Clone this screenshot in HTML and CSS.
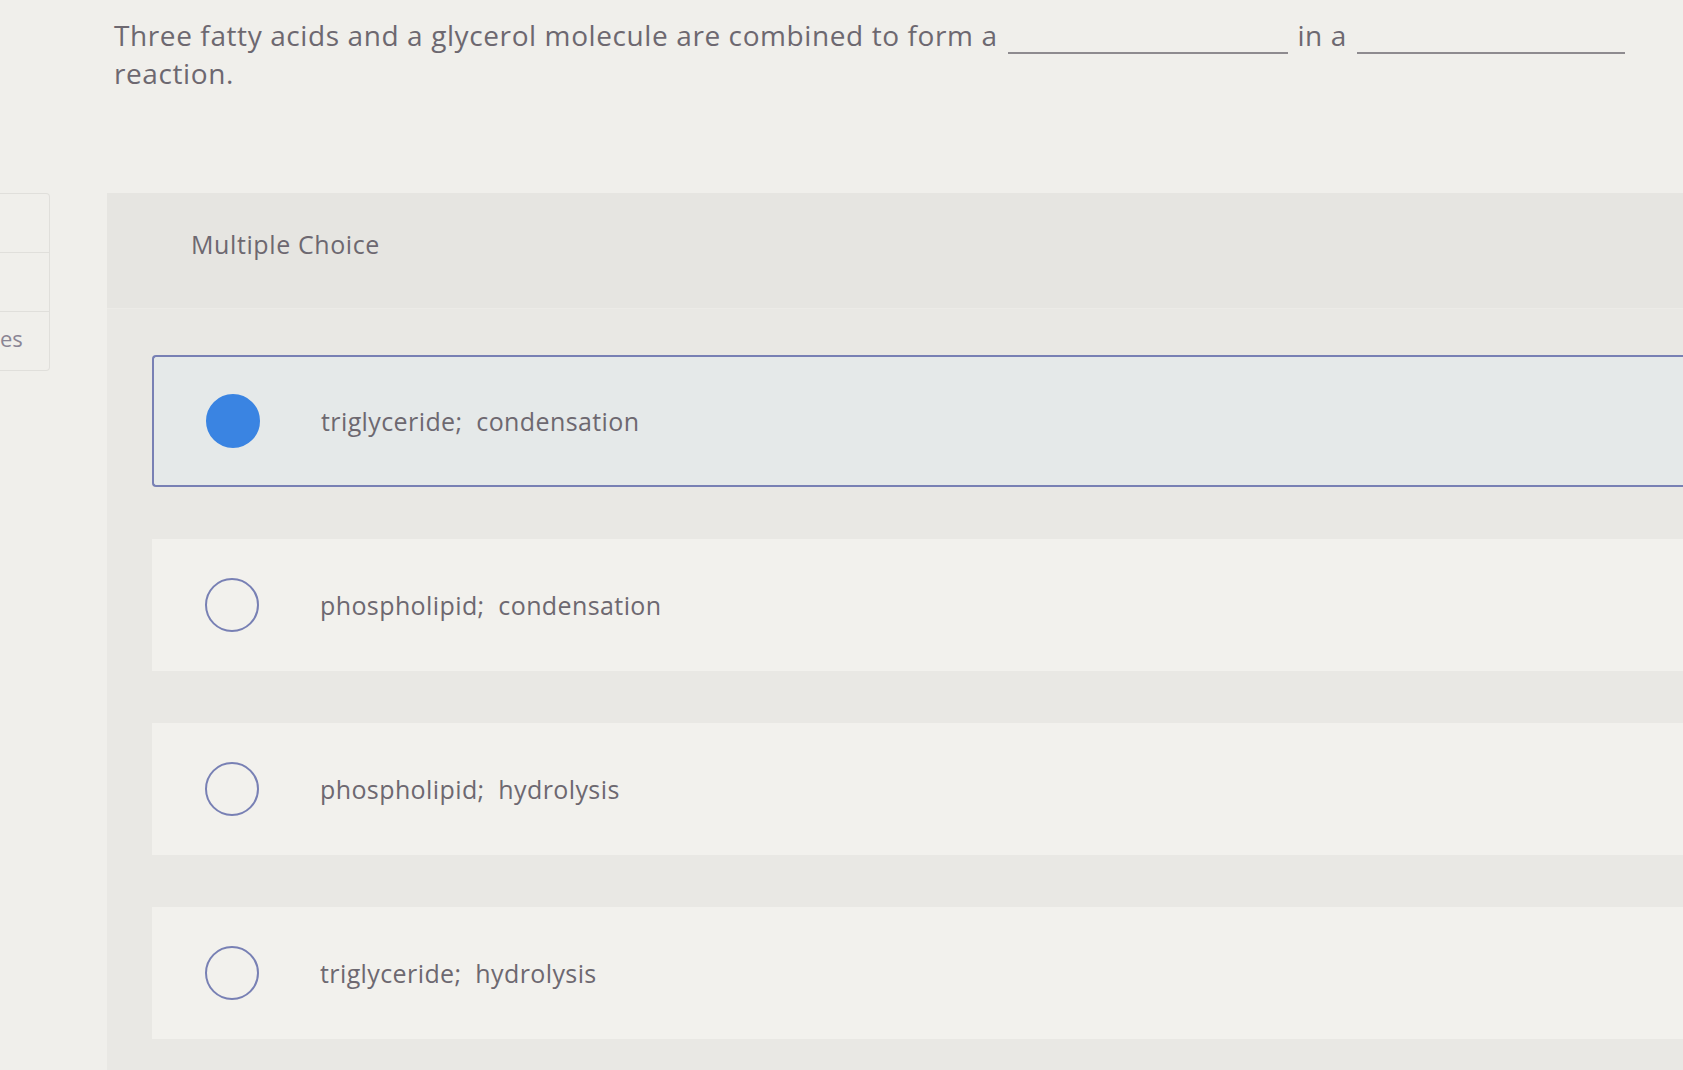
FILE: index.html
```html
<!DOCTYPE html>
<html lang="en">
<head>
    <meta charset="UTF-8">
    <meta name="viewport" content="width=device-width, initial-scale=1.0">
    <title>Multiple Choice</title>
    <link rel="stylesheet" href="styles.css">
</head>
<body>

<div class="page">
    <!-- Columna lateral (cortada por la izquierda) -->
    <aside class="sidebar">
        <div class="side-item"></div>
        <div class="side-item"></div>
        <div class="side-item side-label">es</div>
    </aside>

    <main class="content">
        <p class="question">
            Three fatty acids and a glycerol molecule are combined to form a
            <span class="blank blank-1"></span> in a <span class="blank blank-2"></span>
            reaction.
        </p>

        <section class="choice-panel">
            <div class="choice-header">Multiple Choice</div>

            <div class="options">
                <label class="option selected">
                    <span class="radio"></span>
                    <span class="option-text">triglyceride;&nbsp; condensation</span>
                </label>
                <label class="option">
                    <span class="radio"></span>
                    <span class="option-text">phospholipid;&nbsp; condensation</span>
                </label>
                <label class="option">
                    <span class="radio"></span>
                    <span class="option-text">phospholipid;&nbsp; hydrolysis</span>
                </label>
                <label class="option">
                    <span class="radio"></span>
                    <span class="option-text">triglyceride;&nbsp; hydrolysis</span>
                </label>
            </div>
        </section>
    </main>
</div>

</body>
</html>
```

FILE: styles.css
```css
:root {
    --color-fondo: #f0efeb;
    --color-panel: #e9e8e4;
    --color-cabecera: #e6e5e1;
    --color-opcion: #f2f1ed;
    --color-texto: #6d6870;
    --color-borde: #7880b4;
    --color-seleccion: #e5e9e9;
    --color-radio: #3a84e2;
}

body {
    font-family: 'Open Sans', Lato, sans-serif;
    margin: 0;
    padding: 0;
    background-color: var(--color-fondo);
    color: var(--color-texto);
    overflow: hidden;
}

.page {
    display: grid;
    grid-template-columns: 50px 1fr;
    min-height: 1070px;
}

.sidebar {
    margin-top: 193px;
    align-self: start;
    border: 1px solid #e0dfdb;
    border-left: none;
    border-radius: 0 4px 4px 0;
}

.side-item {
    height: 58px;
    border-bottom: 1px solid #e0dfdb;
}

.side-item:last-child {
    border-bottom: none;
}

.side-label {
    display: flex;
    align-items: center;
    font-size: 22px;
    color: #8a8594;
    padding-bottom: 6px;
    box-sizing: border-box;
}

.content {
    padding-left: 57px;
}

.question {
    margin: 0;
    padding: 16px 0 0 7px;
    font-size: 28px;
    line-height: 38px;
    max-width: 1530px;
    letter-spacing: 0.6px;
}

.blank {
    display: inline-block;
    border-bottom: 2px solid #8e8b8f;
    vertical-align: -8px;
}

.blank-1 {
    width: 280px;
    margin: 0 2px;
}

.blank-2 {
    width: 268px;
    margin-left: 2px;
}

.choice-panel {
    margin-top: 101px;
    background-color: var(--color-panel);
    min-height: 900px;
}

.choice-header {
    background-color: var(--color-cabecera);
    height: 116px;
    box-sizing: border-box;
    padding: 34px 0 0 84px;
    font-size: 25px;
    letter-spacing: 0.6px;
    border-bottom: 1px solid #ecebe7;
}

.options {
    display: flex;
    flex-direction: column;
    gap: 52px;
    padding: 46px 0 0 45px;
}

.option {
    display: flex;
    align-items: center;
    height: 130px;
    padding-left: 52px;
    background-color: var(--color-opcion);
    font-size: 25px;
    letter-spacing: 0.4px;
    cursor: pointer;
    border: 1px solid transparent;
}

.option.selected {
    background-color: var(--color-seleccion);
    border: 2px solid var(--color-borde);
    border-right: none;
    border-radius: 4px 0 0 4px;
    height: 128px;
}

.radio {
    width: 50px;
    height: 50px;
    border: 2px solid var(--color-borde);
    border-radius: 50%;
    flex-shrink: 0;
    margin-right: 61px;
}

.option.selected .radio {
    background-color: var(--color-radio);
    border-color: var(--color-radio);
}

.option-text {
    white-space: nowrap;
}
```
